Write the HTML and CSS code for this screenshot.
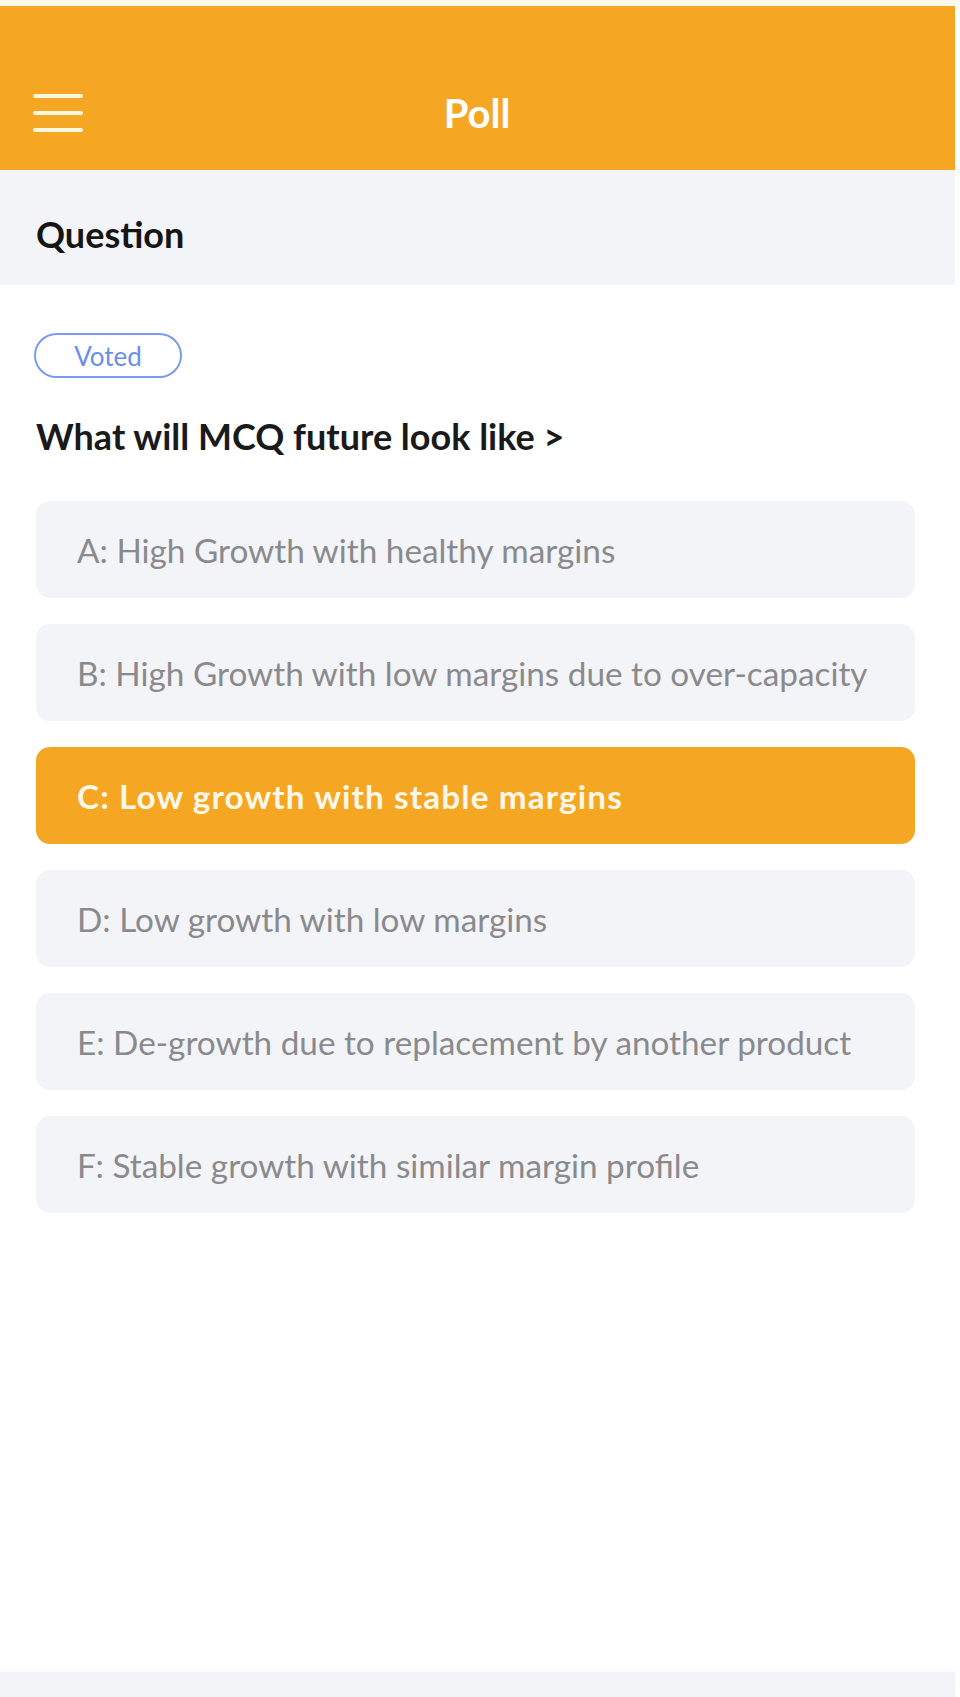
FILE: index.html
```html
<!DOCTYPE html>
<html lang="en">
<head>
    <meta charset="UTF-8">
    <meta name="viewport" content="width=device-width, initial-scale=1.0">
    <title>Poll</title>
    <link rel="stylesheet" href="styles.css">
</head>
<body>

<div class="app">
    <div class="status-strip"></div>

    <header class="topbar">
        <button class="menu-btn" aria-label="Menu">
            <span></span>
            <span></span>
            <span></span>
        </button>
        <h1>Poll</h1>
        <div></div>
    </header>

    <div class="section-title">Question</div>

    <main class="poll">
        <span class="badge">Voted</span>
        <h2 class="question">What will MCQ future look like &gt;</h2>

        <ul class="options">
            <li class="option">A: High Growth with healthy margins</li>
            <li class="option">B: High Growth with low margins due to over-capacity</li>
            <li class="option selected">C: Low growth with stable margins</li>
            <li class="option">D: Low growth with low margins</li>
            <li class="option">E: De-growth due to replacement by another product</li>
            <li class="option">F: Stable growth with similar margin profile</li>
        </ul>
    </main>

    <footer class="bottom-bar"></footer>
</div>

</body>
</html>
```

FILE: styles.css
```css
body {
    margin: 0;
    font-family: Lato, "Noto Sans", sans-serif;
    background-color: #fff;
    color: #1c1c1c;
}
.app {
    width: 955px;
    min-height: 100vh;
    display: flex;
    flex-direction: column;
    background-color: #fff;
}
.status-strip {
    height: 6px;
    background-color: #fdf8ea;
}
.topbar {
    height: 164px;
    box-sizing: border-box;
    padding: 50px 0 0 33px;
    background-color: #f5a623; /* orange principal */
    display: grid;
    grid-template-columns: 1fr auto 1fr;
    align-items: center;
}
.topbar h1 {
    margin: 0;
    font-size: 40px;
    font-weight: 700;
    color: #fff;
    transform: translateX(-17px);
}
.menu-btn {
    width: 50px;
    padding: 0;
    background: none;
    border: none;
    display: flex;
    flex-direction: column;
    gap: 13px;
    cursor: pointer;
}
.menu-btn span {
    display: block;
    height: 4px;
    background-color: #fff8e0;
    border-radius: 2px;
}
.section-title {
    height: 115px;
    box-sizing: border-box;
    padding: 12px 36px 0;
    display: flex;
    align-items: center;
    background-color: #f2f4f7;
    font-size: 36px;
    font-weight: 700;
    color: #151515;
}
.poll {
    flex: 1;
    padding: 48px 40px 40px 36px;
}
.badge {
    display: inline-flex;
    align-items: center;
    justify-content: center;
    width: 148px;
    height: 45px;
    margin-left: -2px;
    box-sizing: border-box;
    border: 2px solid #7a9cf0;
    border-radius: 23px;
    font-size: 26px;
    color: #6a8fe9;
}
.question {
    margin: 36px 0 43px 0;
    font-size: 36px;
    font-weight: 700;
    color: #1a1a1a;
}
.options {
    list-style: none;
    margin: 0;
    padding: 0;
    display: flex;
    flex-direction: column;
    gap: 26px;
}
.option {
    height: 97px;
    box-sizing: border-box;
    padding: 0 41px;
    display: flex;
    align-items: center;
    background-color: #f3f4f8;
    border-radius: 14px;
    font-size: 33.3px;
    color: #8a8a8c;
}
.option.selected {
    background-color: #f5a623;
    color: #fff8e8;
    font-weight: 700;
    letter-spacing: 1.1px;
}
.bottom-bar {
    height: 25px;
    background-color: #f2f3f7;
    box-shadow: 0 -4px 6px rgba(0, 0, 0, 0.02);
}
```
